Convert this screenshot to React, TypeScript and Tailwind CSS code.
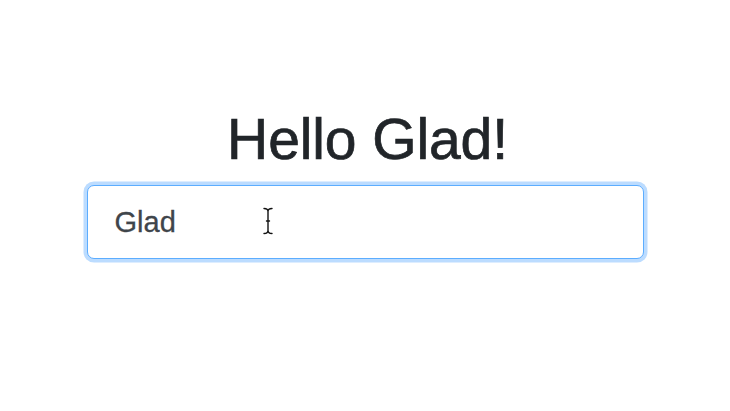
import React from "react";

function IBeam() {
  return (
    <svg
      className="absolute left-[263px] top-[206px]"
      width="10"
      height="30"
      viewBox="0 0 10 30"
      fill="none"
    >
      <path
        d="M1 2.5 C3 2.5 5 3.5 5 5.5 C5 3.5 7 2.5 9 2.5 M5 5.5 L5 14 M3.5 15 L6.5 15 M5 16 L5 24.5 C5 26.5 3 27.5 1 27.5 M5 24.5 C5 26.5 7 27.5 9 27.5"
        stroke="#111"
        strokeWidth="1.4"
        strokeLinecap="round"
      />
    </svg>
  );
}

export default function App() {
  return (
    <div className="relative w-[730px] h-[411px] bg-white font-['Liberation_Sans',Arial,sans-serif]">
      <div className="flex flex-col items-center pt-[105px]">
        <h1 className="ml-[5px] text-[57px] leading-[1.2] tracking-[-0.1px] text-[#212529] font-normal [-webkit-text-stroke:0.7px_#212529]">
          Hello Glad!
        </h1>
        <div className="mt-[12px] flex h-[74px] w-[557px] items-center rounded-[7px] border-[1.5px] border-[#5cadff] bg-white pl-[27px] shadow-[0_0_0_3.5px_#bcdcff]">
          <span className="text-[29px] text-[#3f454b] leading-none [-webkit-text-stroke:0.3px_#3f454b]">Glad</span>
        </div>
      </div>
      <IBeam />
    </div>
  );
}
